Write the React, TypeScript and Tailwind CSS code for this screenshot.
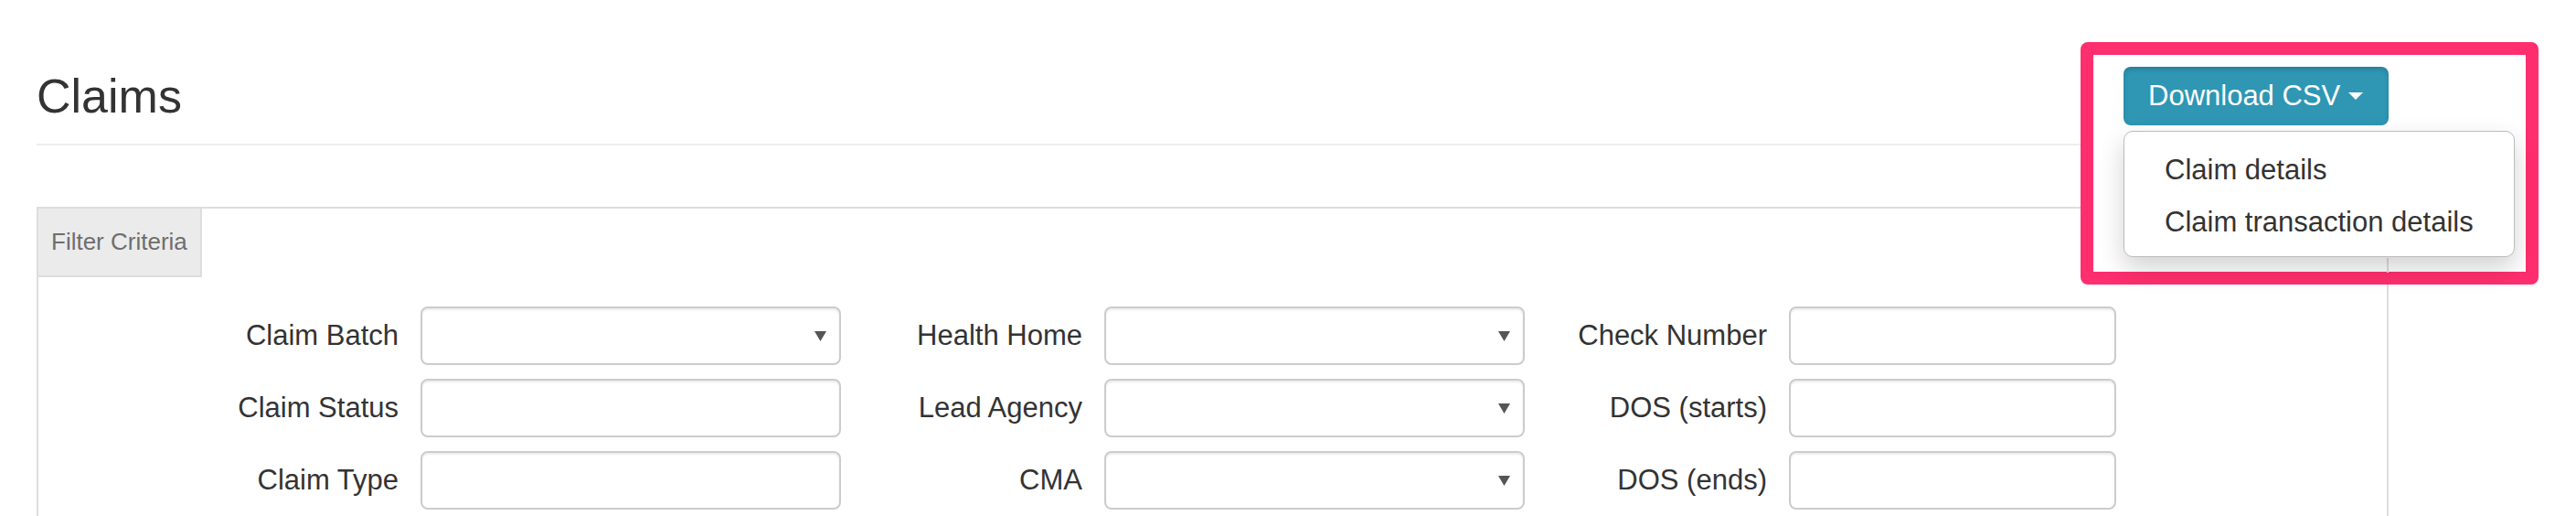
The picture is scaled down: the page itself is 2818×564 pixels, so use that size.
import React from 'react';

type Field = { label: string; kind: 'select' | 'input' };

const rows: Field[][] = [
  [
    { label: 'Claim Batch', kind: 'select' },
    { label: 'Health Home', kind: 'select' },
    { label: 'Check Number', kind: 'input' },
  ],
  [
    { label: 'Claim Status', kind: 'input' },
    { label: 'Lead Agency', kind: 'select' },
    { label: 'DOS (starts)', kind: 'input' },
  ],
  [
    { label: 'Claim Type', kind: 'input' },
    { label: 'CMA', kind: 'select' },
    { label: 'DOS (ends)', kind: 'input' },
  ],
];

const boxClass =
  'h-[64px] w-full rounded-[8px] border-2 border-[#cccccc] bg-white shadow-[inset_0_2px_2px_rgba(0,0,0,0.075)]';

const FieldBox: React.FC<{ kind: 'select' | 'input' }> = ({ kind }) => {
  if (kind === 'input') {
    return <input type="text" className={boxClass + ' px-[18px] outline-none'} />;
  }
  return (
    <div className={boxClass + ' flex items-center justify-end pr-[14px]'}>
      <svg width="13" height="11" viewBox="0 0 13 11">
        <polygon points="0,0 13,0 6.5,11" fill="#555555" />
      </svg>
    </div>
  );
};

const App: React.FC = () => {
  return (
    <div
      className="relative h-[564px] w-[2818px] overflow-hidden bg-white text-[#333333]"
      style={{ fontFamily: '"Liberation Sans", Arial, Helvetica, sans-serif' }}
    >
      <div className="ml-[40px] w-[2573px]">
        {/* page header */}
        <div className="border-b-2 border-[#eeeeee] pb-[23px] pt-[77px]">
          <h1 className="text-[52px] font-normal leading-[57px]">Claims</h1>
        </div>

        {/* filter panel */}
        <div className="mt-[67px] h-[420px] border-2 border-[#dddddd]">
          <div className="flex h-[75px] w-[179px] items-center border-b-2 border-r-2 border-[#dddddd] bg-[#ebebeb] pl-[14px] text-[26px] text-[#6e6e6e]">
            Filter Criteria
          </div>

          <div className="mt-[32px] grid grid-cols-[394px_460px_240px_460px_241px_358px] gap-x-[24px] gap-y-[15px]">
            {rows.map((row) =>
              row.map((f) => (
                <React.Fragment key={f.label}>
                  <label className="self-center whitespace-nowrap text-right text-[31px] leading-[36px]">
                    {f.label}
                  </label>
                  <FieldBox kind={f.kind} />
                </React.Fragment>
              ))
            )}
          </div>
        </div>
      </div>

      {/* highlighted Download CSV dropdown */}
      <div className="absolute left-[2276px] top-[46px] rounded-[8px] border-[14px] border-[#ff2e6e] bg-white pb-[16px] pl-[33px] pr-[12px] pt-[13px]">
        <div className="absolute left-[321px] top-[222px] h-[16px] w-[2px] bg-[#dddddd]" />
        <button className="flex h-[64px] w-[290px] items-center rounded-[8px] bg-[#2f96b4] pl-[27px] text-[31px] text-white shadow-[inset_0_3px_5px_rgba(0,0,0,0.15)]">
          Download CSV
          <svg className="ml-[9px]" width="16" height="8" viewBox="0 0 16 8">
            <polygon points="0,0 16,0 8,8" fill="#ffffff" />
          </svg>
        </button>
        <div className="relative mt-[6px] w-[428px] rounded-[10px] border border-[#bbbbbb] bg-white pb-[9px] pt-[13px] shadow-[0_12px_28px_rgba(0,0,0,0.18)]">
          <div className="pl-[44px] text-[31px] leading-[57px]">Claim details</div>
          <div className="pl-[44px] text-[31px] leading-[57px]">Claim transaction details</div>
        </div>
      </div>
    </div>
  );
};

export default App;
